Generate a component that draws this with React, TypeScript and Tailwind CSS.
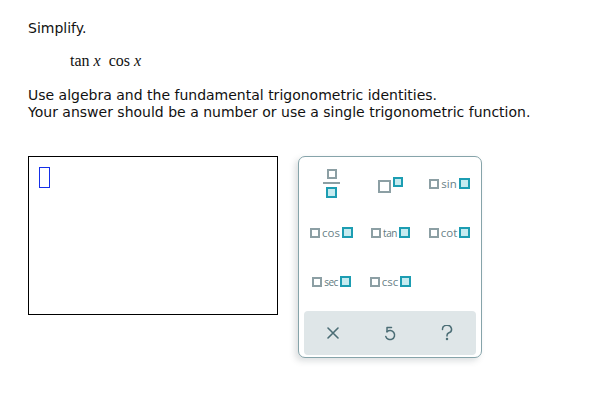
import React from "react";

const Empty = ({ size = "w-[10px] h-[10px]" }: { size?: string }) => (
  <span className={`inline-block ${size} border-2 border-[#8c9fa4] bg-white`} />
);

const Slot = ({ size = "w-[11px] h-[11px]" }: { size?: string }) => (
  <span className={`inline-block ${size} border-2 border-[#1c9db2] bg-[#c6ebf0]`} />
);

function Fn({ name, small }: { name: string; small?: boolean }) {
  return (
    <div className="flex items-center gap-[2px]">
      <Empty />
      <span
        className={
          small
            ? "text-[10px] tracking-[-0.5px] text-[#5f7a80] leading-none"
            : "text-[11.5px] text-[#6a8288] leading-none"
        }
      >
        {name}
      </span>
      <Slot />
    </div>
  );
}

export default function App() {
  return (
    <div className="w-[599px] h-[412px] bg-white pl-[28px] pt-[20px] text-[#111] font-['DejaVu_Sans',Verdana,sans-serif]">
      <p className="text-[14px] leading-[17px]">Simplify.</p>

      <p className="mt-[14px] ml-[42px] text-[16px] leading-[19px] font-['Liberation_Serif',serif]">
        tan<span className="italic ml-[4px]">x</span>
        <span className="ml-[8px]">cos</span>
        <span className="italic ml-[4px]">x</span>
      </p>

      <div className="mt-[17px] text-[14px] leading-[17px]">
        <p>Use algebra and the fundamental trigonometric identities.</p>
        <p>Your answer should be a number or use a single trigonometric function.</p>
      </div>

      <div className="mt-[35px] flex items-start gap-[20px]">
        {/* answer field */}
        <div className="w-[250px] h-[159px] border border-black pl-[10px] pt-[10px]">
          <div className="w-[11px] h-[21px] border-[1.5px] border-[#1530e8]" />
        </div>

        {/* keypad */}
        <div className="w-[184px] h-[202px] border border-[#86a4aa] rounded-[7px] bg-white shadow-[-3px_3px_6px_rgba(60,80,85,0.18)] pt-[2px] font-['Open_Sans',Lato,sans-serif]">
          <div className="grid grid-cols-[59px_59px_59px] px-[3px]">
            <div className="h-[49px] flex flex-col items-center justify-center">
              <Empty />
              <span className="block w-[17px] h-[2px] bg-[#8c9fa4] my-[3px]" />
              <Slot />
            </div>
            <div className="h-[49px] flex items-center justify-center">
              <div className="flex items-start pt-[1px]">
                <span className="mt-[6px]">
                  <Empty size="w-[13px] h-[13px]" />
                </span>
                <span className="ml-[2px]">
                  <Slot size="w-[10px] h-[10px]" />
                </span>
              </div>
            </div>
            <div className="h-[49px] flex items-center justify-center">
              <Fn name="sin" />
            </div>

            <div className="h-[49px] flex items-center justify-center">
              <Fn name="cos" />
            </div>
            <div className="h-[49px] flex items-center justify-center">
              <Fn name="tan" small />
            </div>
            <div className="h-[49px] flex items-center justify-center">
              <Fn name="cot" />
            </div>

            <div className="h-[49px] flex items-center justify-center">
              <Fn name="sec" small />
            </div>
            <div className="h-[49px] flex items-center justify-center">
              <Fn name="csc" />
            </div>
            <div className="h-[49px]" />
          </div>

          <div className="mx-[5px] mt-[5px] h-[44px] rounded-[4px] bg-[#dfe6e8] grid grid-cols-3 items-center">
            <div className="flex justify-center">
              <svg width="12" height="12" viewBox="0 0 12 12" fill="none" stroke="#4b6d75" strokeWidth="1.6" strokeLinecap="round">
                <path d="M1 1 L11 11 M11 1 L1 11" />
              </svg>
            </div>
            <div className="flex justify-center">
              <svg width="12" height="16" viewBox="0 0 12 16" fill="none" stroke="#4b6d75" strokeWidth="1.5" strokeLinecap="round" strokeLinejoin="round">
                <path d="M7.5 2.5 L3 2.5 L3 6.8" />
                <path d="M3 6.8 A4.5 4.5 0 1 1 1.8 11.5" />
              </svg>
            </div>
            <div className="flex justify-center">
              <svg width="12" height="16" viewBox="0 0 12 16" fill="none" stroke="#4b6d75" strokeWidth="1.5" strokeLinecap="round">
                <path d="M1.5 4.5 A4.5 4 0 1 1 7.5 8 Q6 8.8 6 10.5 L6 11" />
                <circle cx="6" cy="14" r="0.5" fill="#4b6d75" />
              </svg>
            </div>
          </div>
        </div>
      </div>
    </div>
  );
}
